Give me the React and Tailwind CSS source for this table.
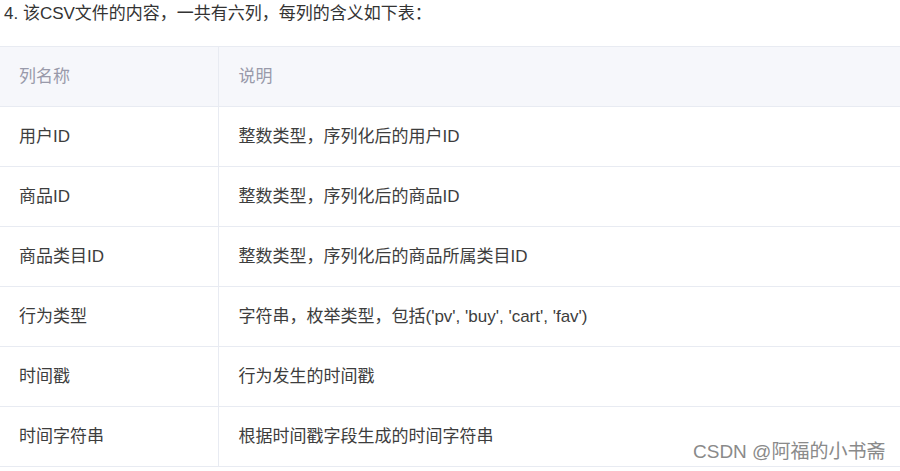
import React from 'react';

const rows = [
  ['用户ID', '整数类型，序列化后的用户ID'],
  ['商品ID', '整数类型，序列化后的商品ID'],
  ['商品类目ID', '整数类型，序列化后的商品所属类目ID'],
  ['行为类型', "字符串，枚举类型，包括('pv', 'buy', 'cart', 'fav')"],
  ['时间戳', '行为发生的时间戳'],
  ['时间字符串', '根据时间戳字段生成的时间字符串'],
];

export default function App() {
  return (
    <div
      className="w-[900px] h-[471px] bg-white overflow-hidden text-[#3d3d3d] relative"
      style={{ fontFamily: '"Liberation Sans", "Noto Sans CJK SC", sans-serif' }}
    >
      {/* Intro line */}
      <p className="pl-[4px] pt-[2px] h-[46px] text-[17px] leading-[24px] text-[#333]">
        4. 该CSV文件的内容，一共有六列，每列的含义如下表：
      </p>

      {/* Table */}
      <table className="w-full border-collapse text-[17px]">
        <thead>
          <tr className="bg-[#f6f7fb] h-[60px]">
            <th className="w-[218px] border-y border-r border-[#e8ebf2] pl-[19px] text-left font-normal text-[#999aaa]">
              列名称
            </th>
            <th className="border-y border-[#e8ebf2] pl-[20px] text-left font-normal text-[#999aaa]">
              说明
            </th>
          </tr>
        </thead>
        <tbody>
          {rows.map(([name, desc], i) => (
            <tr key={i} className="h-[60px]">
              <td className="border-b border-r border-[#e8ebf2] pl-[19px]">{name}</td>
              <td className="border-b border-[#e8ebf2] pl-[20px]">{desc}</td>
            </tr>
          ))}
        </tbody>
      </table>

      {/* Watermark */}
      <div className="absolute left-[693px] top-[440px] text-[19px] leading-[24px] text-[#8a8a8a] [text-shadow:1px_1px_0_#fff]">
        CSDN @阿福的小书斋
      </div>
    </div>
  );
}
